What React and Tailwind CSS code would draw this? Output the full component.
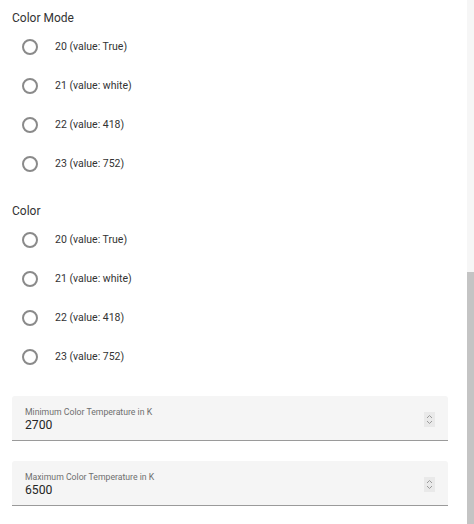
import { useState } from 'react'

const options = [
  { id: 20, value: 'True' },
  { id: 21, value: 'white' },
  { id: 22, value: '418' },
  { id: 23, value: '752' },
]

function RadioGroup({ title, first, selected, onSelect }) {
  return (
    <div className={first ? 'pt-[10px]' : 'mt-[20px]'}>
      <div className="h-[17px] text-[12px] leading-[17px] text-[#333333]">{title}</div>
      {options.map(o => (
        <button
          key={o.id}
          onClick={() => onSelect(o.id)}
          className="flex h-[39px] w-full items-center text-left"
        >
          <span className="ml-[10px] flex h-[16px] w-[16px] items-center justify-center rounded-full border-2 border-[#8a8a8a]">
            {selected === o.id && <span className="h-[8px] w-[8px] rounded-full bg-[#8a8a8a]" />}
          </span>
          <span className="ml-[17px] text-[10.5px] text-[#333333]">
            {o.id} (value: {o.value})
          </span>
        </button>
      ))}
    </div>
  )
}

function NumberField({ label, value, className }) {
  return (
    <div className={`w-[436px] h-[45px] rounded-t-[3px] border-b border-[#9a9a9a] bg-[#f5f5f5] pl-[13px] pr-[13px] pt-[11px] flex items-start ${className}`}>
      <div className="flex-1">
        <div className="text-[8.7px] leading-[11px] text-[#6f6f6f]">{label}</div>
        <div className="text-[12.2px] leading-[14px] text-[#262626]">{value}</div>
      </div>
      <div className="mt-[5px] flex h-[15px] w-[11px] flex-col items-center justify-center bg-[#e9e9e9]">
        <svg width="7" height="11" viewBox="0 0 7 11" fill="none" stroke="#9a9a9a" strokeWidth="1">
          <path d="M1 4 L3.5 1.5 L6 4" />
          <path d="M1 7 L3.5 9.5 L6 7" />
        </svg>
      </div>
    </div>
  )
}

export default function App() {
  const [mode, setMode] = useState(null)
  const [color, setColor] = useState(null)

  return (
    <div className="flex h-[524px] w-[474px] overflow-hidden bg-white" style={{ fontFamily: 'Roboto, "Noto Sans", sans-serif' }}>
      <div className="flex-1 pl-3">
        <RadioGroup title="Color Mode" first selected={mode} onSelect={setMode} />
        <RadioGroup title="Color" selected={color} onSelect={setColor} />
        <NumberField className="mt-[20px]" label="Minimum Color Temperature in K" value="2700" />
        <NumberField className="mt-[20px]" label="Maximum Color Temperature in K" value="6500" />
      </div>
      {/* scrollbar */}
      <div className="flex w-[7px] flex-col bg-[#f6f6f6]">
        <div className="h-[272px]" />
        <div className="flex-1 bg-[#c4c4c4]" />
      </div>
    </div>
  )
}
